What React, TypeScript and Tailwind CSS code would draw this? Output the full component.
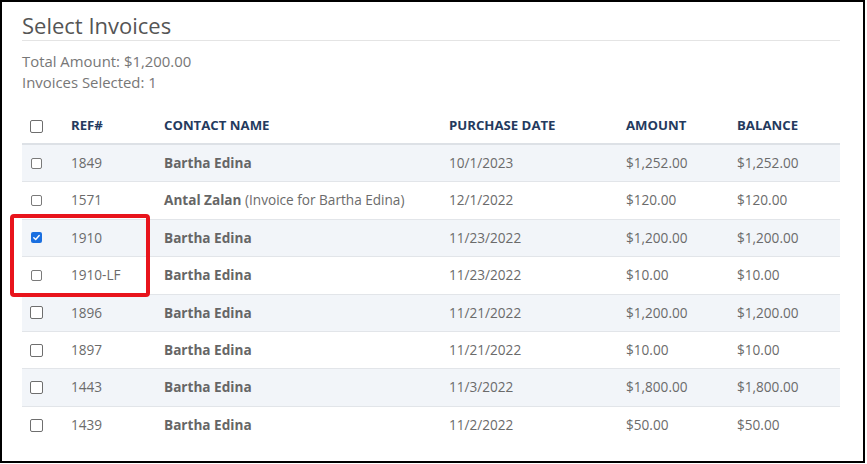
import React from "react";

type Row = {
  ref: string;
  name: string;
  note?: string;
  date: string;
  amount: string;
  balance: string;
  checked?: boolean;
  small?: boolean;
};

const rows: Row[] = [
  { ref: "1849", name: "Bartha Edina", date: "10/1/2023", amount: "$1,252.00", balance: "$1,252.00", small: true },
  { ref: "1571", name: "Antal Zalan", note: "(Invoice for Bartha Edina)", date: "12/1/2022", amount: "$120.00", balance: "$120.00", small: true },
  { ref: "1910", name: "Bartha Edina", date: "11/23/2022", amount: "$1,200.00", balance: "$1,200.00", checked: true, small: true },
  { ref: "1910-LF", name: "Bartha Edina", date: "11/23/2022", amount: "$10.00", balance: "$10.00", small: true },
  { ref: "1896", name: "Bartha Edina", date: "11/21/2022", amount: "$1,200.00", balance: "$1,200.00" },
  { ref: "1897", name: "Bartha Edina", date: "11/21/2022", amount: "$10.00", balance: "$10.00" },
  { ref: "1443", name: "Bartha Edina", date: "11/3/2022", amount: "$1,800.00", balance: "$1,800.00" },
  { ref: "1439", name: "Bartha Edina", date: "11/2/2022", amount: "$50.00", balance: "$50.00" },
];

function Box({ checked, small }: { checked?: boolean; small?: boolean }) {
  if (checked) {
    return (
      <div className="w-[11px] h-[11px] rounded-[2px] bg-[#1a6fe0] flex items-center justify-center">
        <svg width="9" height="9" viewBox="0 0 10 10">
          <path d="M2 5.2 L4.1 7.2 L8 2.8" stroke="white" strokeWidth="1.6" fill="none" strokeLinecap="round" strokeLinejoin="round" />
        </svg>
      </div>
    );
  }
  return (
    <div
      className={
        small
          ? "w-[11px] h-[11px] rounded-[2px] border border-[#7a7a7a] bg-white"
          : "w-[13px] h-[13px] rounded-[2px] border border-[#6e6e6e] bg-white"
      }
    />
  );
}

export default function App() {
  return (
    <div className="w-[867px] h-[464px] bg-white" style={{ fontFamily: '"Open Sans", "Noto Sans", sans-serif' }}>
      <div className="w-[865px] h-[463px] border-2 border-black pl-[20px] pr-[23px] pt-[8px]">
        <div className="text-[22px] leading-[30px] text-[#555] border-b border-[#e4e4e4]">Select Invoices</div>
        <div className="mt-[10px] text-[14.9px] leading-[21px] text-[#777]">
          <div>Total Amount: $1,200.00</div>
          <div>Invoices Selected: 1</div>
        </div>
        <div className="relative mt-[16px]">
          <div className="flex h-[36px] items-center border-b-2 border-[#dde1e6] text-[13.2px] font-bold text-[#243a5e]">
            <div className="w-[38px] pl-[8px] flex items-center"><Box /></div>
            <div className="w-[93px] pl-[11px]">REF#</div>
            <div className="w-[285px] pl-[11px]">CONTACT NAME</div>
            <div className="w-[177px] pl-[11px]">PURCHASE DATE</div>
            <div className="w-[111px] pl-[11px]">AMOUNT</div>
            <div className="flex-1 pl-[11px]">BALANCE</div>
          </div>
          {rows.map((r, i) => (
            <div
              key={r.ref}
              className={
                "flex h-[37.4px] items-center text-[13.6px] text-[#6b6b6b] " +
                (i % 2 === 0 ? "bg-[#f2f5f9] " : "bg-white ") +
                (i < rows.length - 1 ? "border-b border-[#e2e5e9]" : "")
              }
            >
              <div className={"w-[38px] flex items-center " + (r.small ? "pl-[9px]" : "pl-[8px]")}>
                <Box checked={r.checked} small={r.small} />
              </div>
              <div className="w-[93px] pl-[11px]">{r.ref}</div>
              <div className="w-[285px] pl-[11px]">
                <span className="font-bold text-[#666]">{r.name}</span>
                {r.note ? <span> {r.note}</span> : null}
              </div>
              <div className="w-[177px] pl-[11px]">{r.date}</div>
              <div className="w-[111px] pl-[11px]">{r.amount}</div>
              <div className="flex-1 pl-[11px]">{r.balance}</div>
            </div>
          ))}
          <div className="absolute left-[-12px] top-[105px] w-[140px] h-[83px] border-4 border-[#e8141c] rounded-[4px]" />
        </div>
      </div>
    </div>
  );
}
